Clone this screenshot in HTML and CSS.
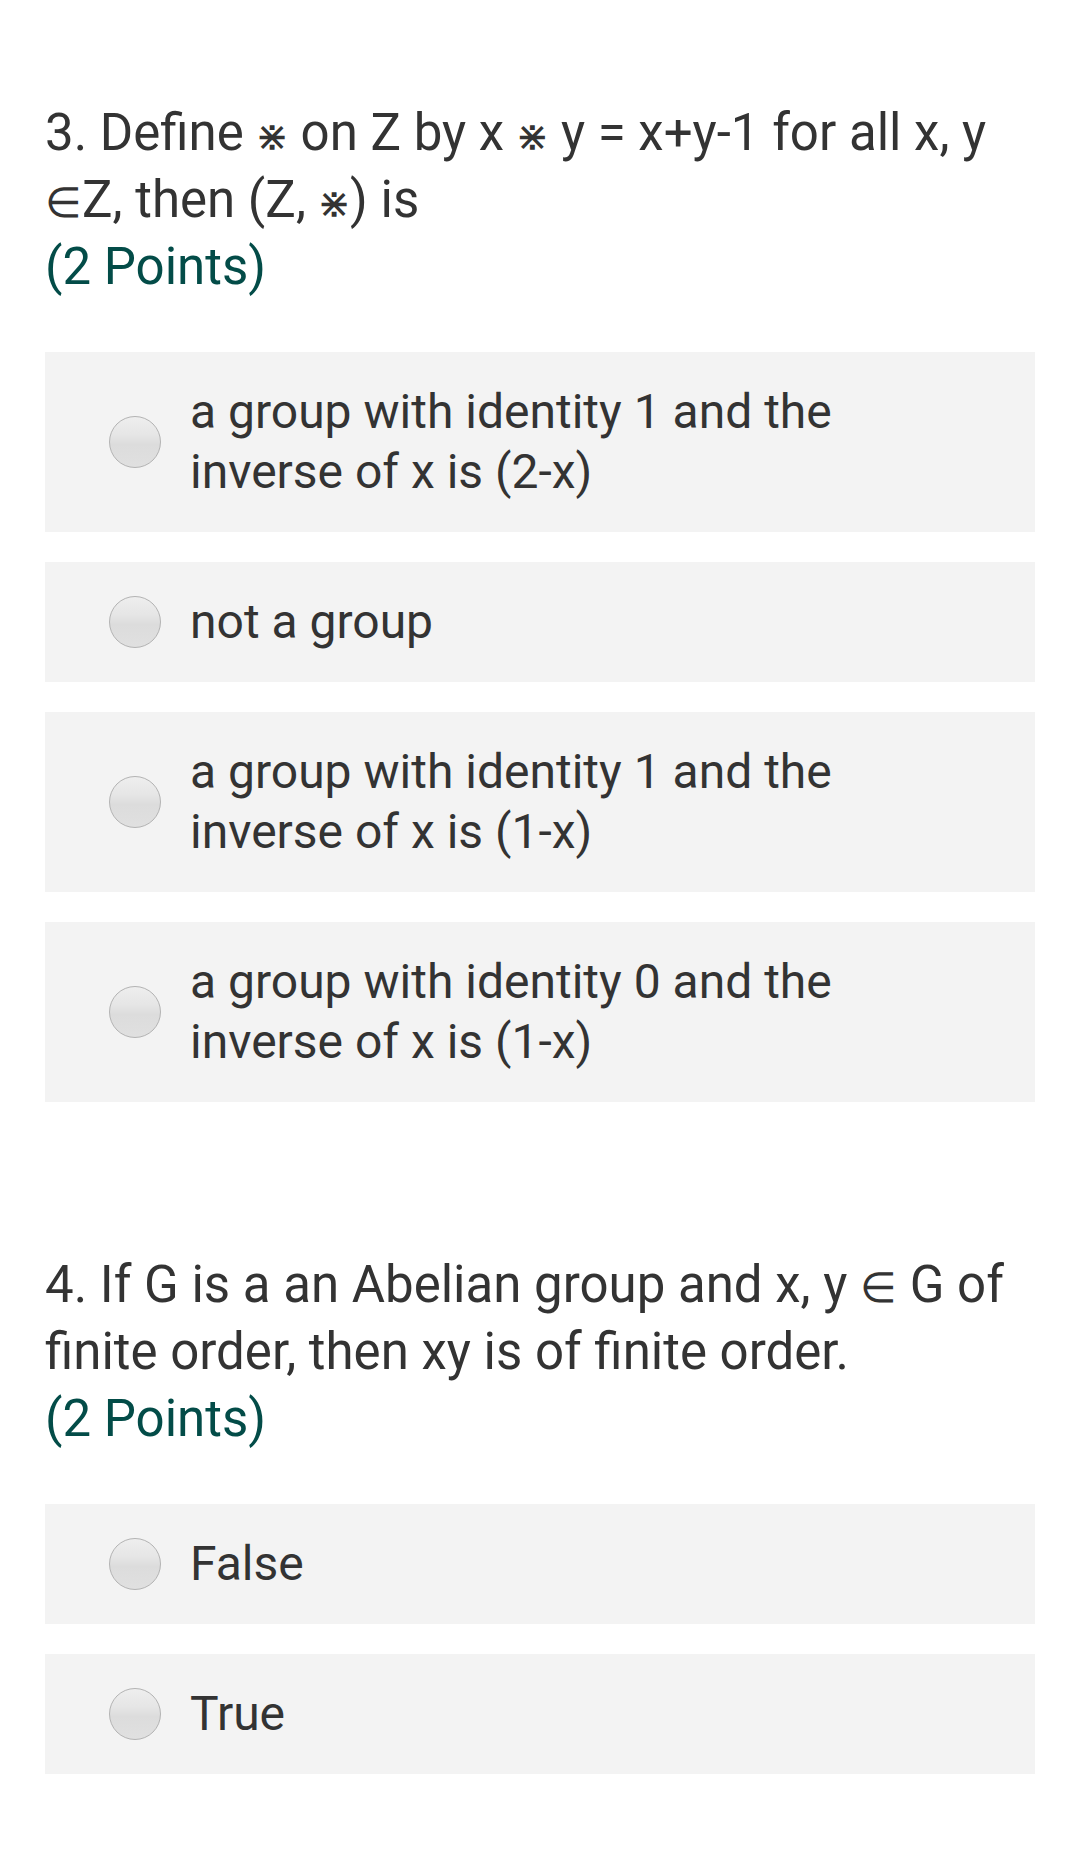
FILE: index.html
```html
<!DOCTYPE html>
<html lang="en">
<head>
<meta charset="utf-8">
<title>Quiz</title>
<link rel="stylesheet" href="styles.css">
</head>
<body>
<main class="form">
  <section class="question">
    <div class="q-title">3. Define <span class="op">⋇</span> on Z by x <span class="op">⋇</span> y = x+y-1 for all x, y <span class="el">∈</span>Z, then (Z, <span class="op">⋇</span>) is<br><span class="points">(2 Points)</span></div>
    <div class="options">
      <label class="option"><span class="radio"></span><span class="opt-text">a group with identity 1 and the inverse of x is (2-x)</span></label>
      <label class="option"><span class="radio"></span><span class="opt-text">not a group</span></label>
      <label class="option"><span class="radio"></span><span class="opt-text">a group with identity 1 and the inverse of x is (1-x)</span></label>
      <label class="option"><span class="radio"></span><span class="opt-text">a group with identity 0 and the inverse of x is (1-x)</span></label>
    </div>
  </section>
  <section class="question">
    <div class="q-title">4. If G is a an Abelian group and x, y <span class="el">∈</span> G of finite order, then xy is of finite order.<br><span class="points">(2 Points)</span></div>
    <div class="options">
      <label class="option"><span class="radio"></span><span class="opt-text">False</span></label>
      <label class="option"><span class="radio"></span><span class="opt-text">True</span></label>
    </div>
  </section>
</main>
</body>
</html>
```
FILE: styles.css
```css
html, body {
  margin: 0;
  padding: 0;
  background: #ffffff;
}
body {
  font-family: Roboto, "Liberation Sans", Arial, sans-serif;
  color: #333333;
}
.form {
  width: 990px;
  padding: 99px 0 0 45px;
}
.question + .question {
  margin-top: 149px;
}
.q-title {
  font-size: 51px;
  line-height: 67px;
  color: #333333;
}
.op {
  font-family: "DejaVu Sans", sans-serif;
  font-size: 40px;
  line-height: 1;
  margin: 0 -1px;
}
.el {
  font-size: 42px;
  line-height: 1;
}
.points {
  color: #034c48;
}
.options {
  margin-top: 52px;
  display: flex;
  flex-direction: column;
  gap: 30px;
}
.option {
  display: flex;
  align-items: center;
  background: #f3f3f3;
  padding: 30px 85px 30px 64px;
}
.radio {
  flex: 0 0 auto;
  box-sizing: border-box;
  width: 52px;
  height: 52px;
  border-radius: 50%;
  border: 1.5px solid #b3b3b3;
  background: linear-gradient(to bottom, #eeeeee 0%, #e6e6e6 35%, #dcdcdc 55%, #e0e0e0 100%);
  margin-right: 29px;
}
.opt-text {
  font-size: 48px;
  line-height: 60px;
  color: #333333;
}
```
